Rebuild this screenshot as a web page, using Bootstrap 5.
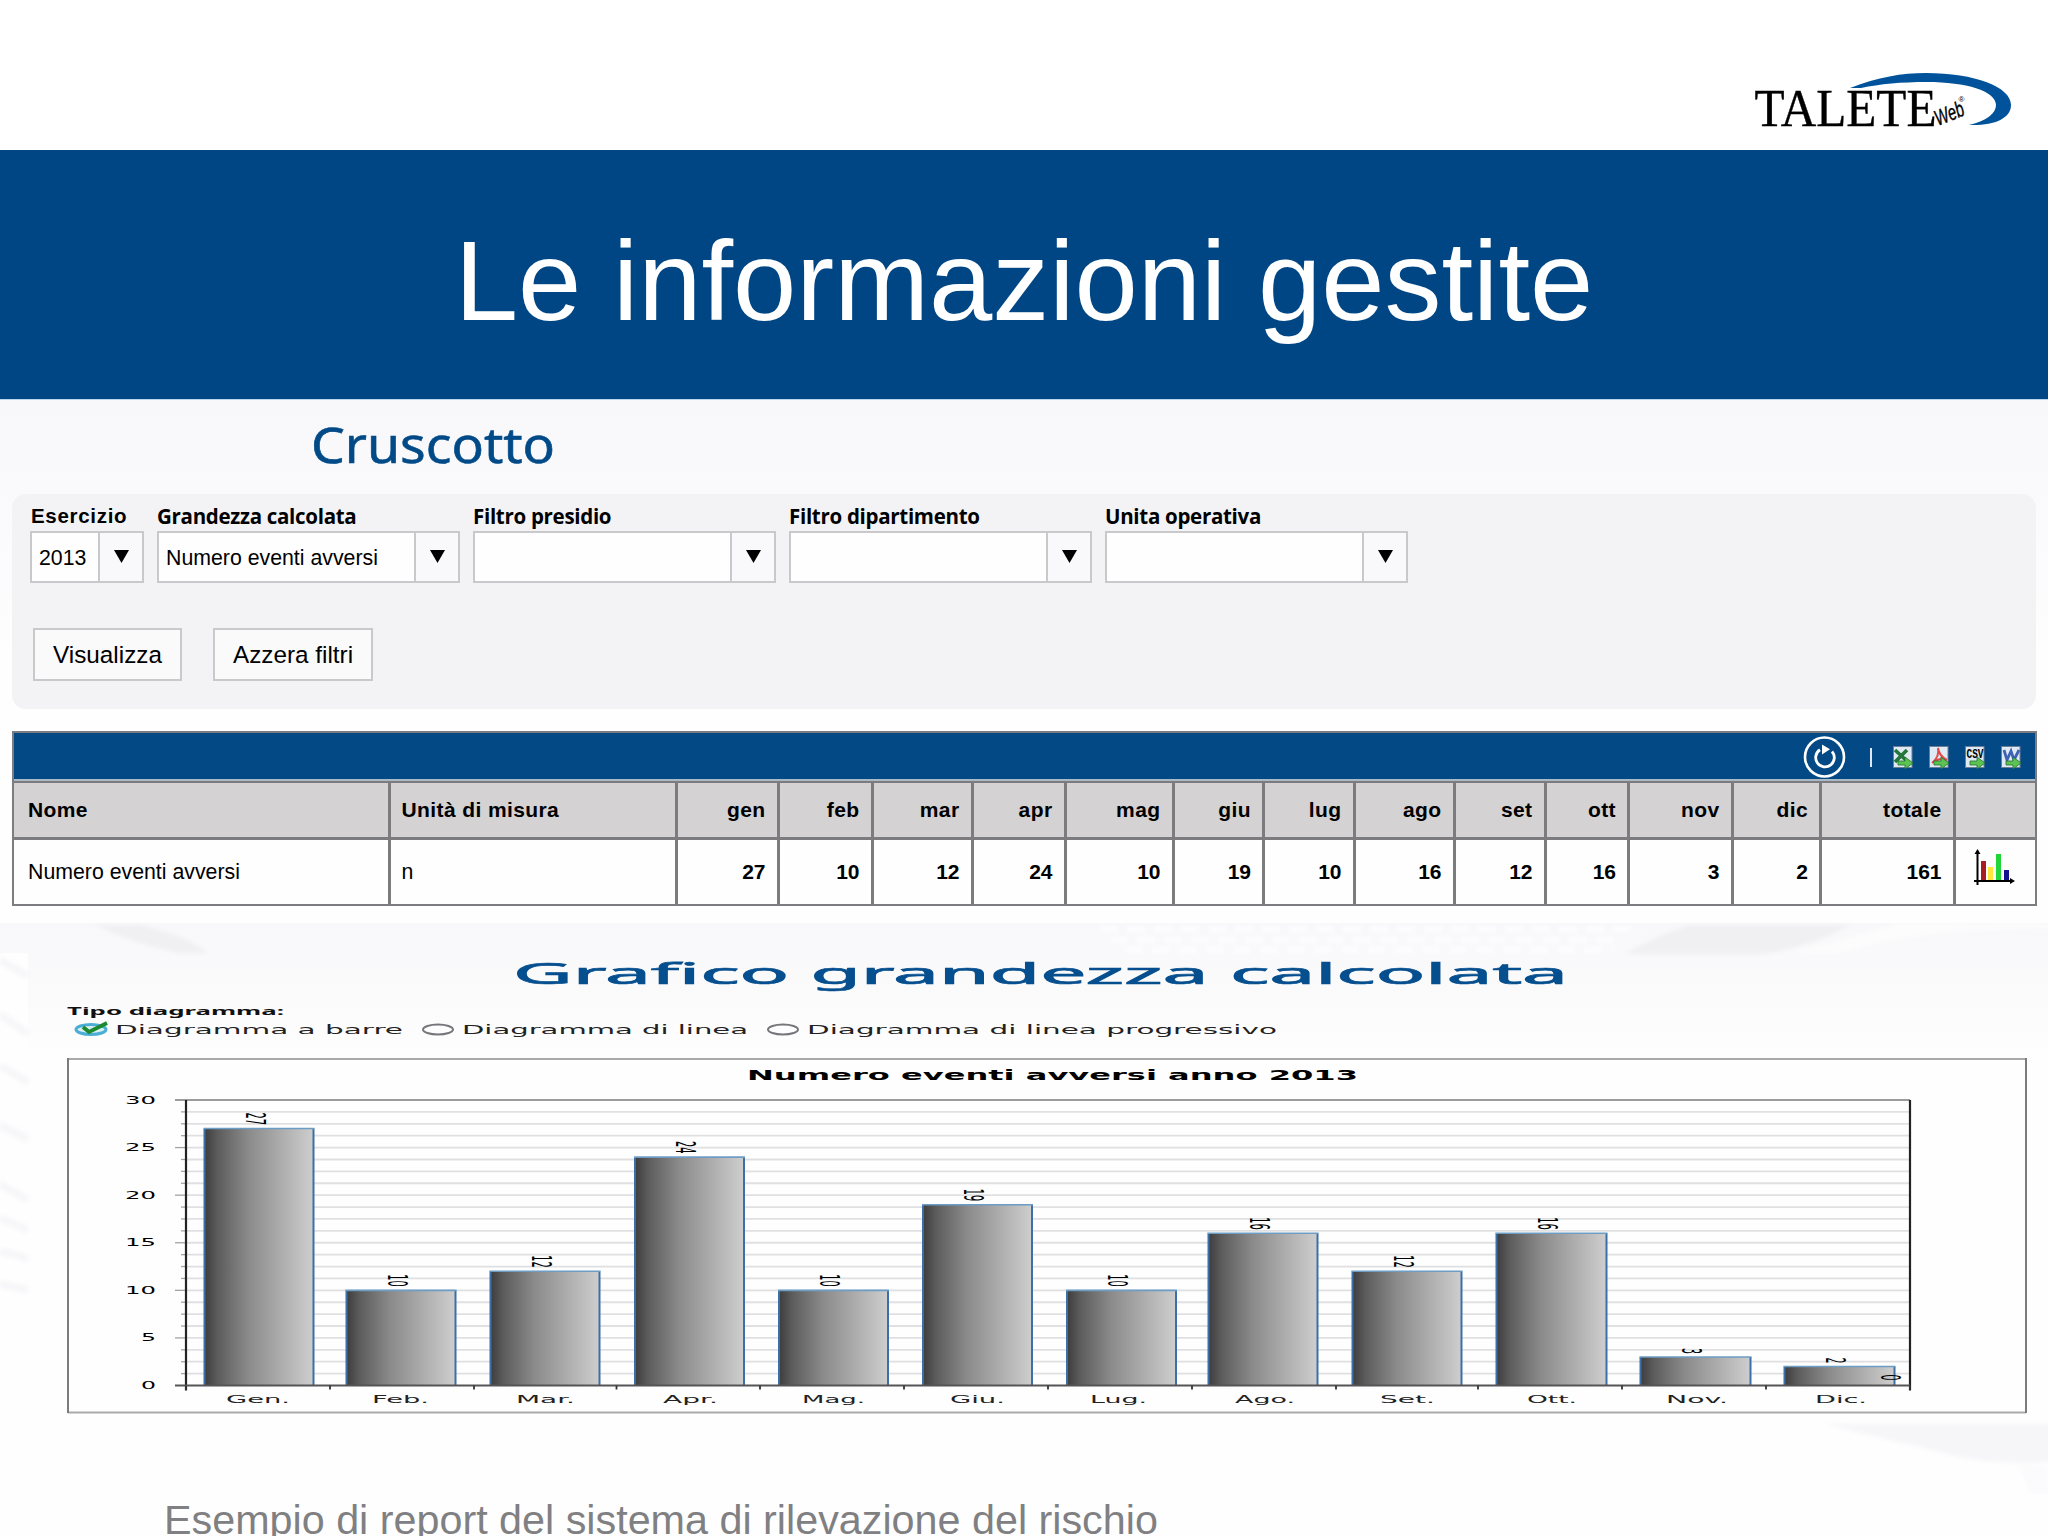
<!DOCTYPE html>
<html lang="it">
<head>
<meta charset="utf-8">
<title>Le informazioni gestite</title>
<link rel="stylesheet" href="https://cdn.jsdelivr.net/npm/bootstrap@5.3.0/dist/css/bootstrap.min.css">
<style>
body{width:2048px;height:1536px;overflow:hidden;background:#fefefe;color:#000;font-family:"Liberation Sans",Arial,sans-serif}
svg{display:block}
.brand-bar{height:150px;padding:60px 0 0 1745px;background:#fff}
.title-band{height:249px;background:#004685;padding-top:12px}
.title-band h1{font-size:113.8px;font-weight:400;line-height:1}
.board{height:523px;background:linear-gradient(#f8f7fa 0,#faf9fc 90px,#fefefe 260px);border-top:1px solid #b9d8ee}
.board-head{height:94px;padding-left:300px}
.filter-panel{margin:0 12px;height:215px;background:#f3f2f5;border-radius:14px;padding:9px 18px 0}
.filters{gap:13px}
.filters label{display:block;height:28px;font:700 20.5px/26px "Open Sans","Noto Sans",sans-serif;letter-spacing:-.3px;white-space:nowrap}
.filters label.plain-label{font-family:"Liberation Sans",sans-serif;font-size:20.5px;letter-spacing:.7px;padding-left:1px}
.combo{width:303px;height:52px;border:2px solid #c9c8cb;background:#fefefe;font-size:21.3px}
.combo-year{width:114px}
.combo-text{padding-left:7px;padding-top:3px;white-space:nowrap}
.combo-arrow{width:44px;background:#f9f8fb;border-left:2px solid #c9c8cb}
.combo-arrow svg{margin-top:-2px}
.btn-line{padding:45px 0 0 3px;gap:31px}
.tool-btn{height:53px;width:149px;border:2px solid #c9c8cb;border-radius:0;background:#fafafb;font-size:24.3px;line-height:49px;padding:0;color:#000}
.tool-btn.btn-wide{width:160px}
.data-box{margin:22px 11px 0 12px;border:2px solid #7b7d80}
.tool-strip{height:48px;background:#024986;border-bottom:2px solid #a9bac6;padding-right:14px}
.data-tbl{table-layout:fixed;width:2021px;border-collapse:collapse;font-size:21px;margin:0}
.data-tbl th,.data-tbl td{border:3px solid #7c7b7d;border-top-width:2px;padding:0 11px 0 11px;vertical-align:middle;line-height:24px;white-space:nowrap}
.data-tbl tr>*:first-child{border-left:0;padding-left:14px}
.data-tbl tr>*:last-child{border-right:0;padding:0}
.data-tbl tbody tr>*{border-bottom:0}
.data-tbl th{height:56px;background:#d4d2d3;letter-spacing:.4px}
.data-tbl td{height:66px;background:#fefefe;font-weight:700}
.data-tbl td.thin{font-weight:400;font-size:21.3px}
.chart-zone{height:572px}
.foot-note{margin-left:164px;padding-top:5px;font-size:41.3px;line-height:42px;height:42px;color:#808083;white-space:nowrap}
</style>
</head>
<body>
<header class="brand-bar">
<svg width="280" height="75" viewBox="1745 60 280 75">
<path d="M1850 88C1878 77 1902 73 1926 73C1975 73 2011 87 2011 105C2011 119 1993 126 1969 125C1987 121 1996 113 1996 105C1996 91 1966 82 1927 82C1901 82 1880 84 1861 88Z" fill="#00539b"/>
<text x="1754.500" y="125.500" font-family="Liberation Serif,serif" font-size="53" textLength="182" lengthAdjust="spacingAndGlyphs" stroke="#000" stroke-width=".4">TALETE</text>
<text transform="translate(1938 126) rotate(-22)" font-family="Liberation Sans,sans-serif" font-style="italic" font-size="22" textLength="30" lengthAdjust="spacingAndGlyphs" stroke="#000" stroke-width=".4">Web</text>
<text x="1958.500" y="101.500" font-family="Liberation Sans,sans-serif" font-size="8">®</text>
</svg>
</header>
<section class="title-band d-flex align-items-center justify-content-center"><h1 class="m-0 text-white">Le informazioni gestite</h1></section>
<section class="board">
<div class="board-head">
<svg width="300" height="94" viewBox="300 400 300 94"><text x="311" y="462.500" fill="#004a87" stroke="#004a87" stroke-width=".6" font-family="Noto Sans,sans-serif" font-size="49" textLength="244" lengthAdjust="spacingAndGlyphs">Cruscotto</text></svg>
</div>
<div class="filter-panel">
<div class="filters d-flex" id="filters"></div>
<div class="btn-line d-flex">
<button class="tool-btn btn">Visualizza</button>
<button class="tool-btn btn btn-wide">Azzera filtri</button>
</div>
</div>
<div class="data-box">
<div class="tool-strip d-flex justify-content-end">
<svg width="230" height="46" viewBox="1791 733 230 46">
<g fill="none" stroke="#fff"><circle cx="1824.500" cy="757" r="19.500" stroke-width="2.600"/><path d="M1820 749.800A9.300 9.300 0 1 0 1832 751.500" stroke-width="2.800"/></g>
<path d="M1822 744.500l8 4.800-8 5.300z" fill="#fff"/>
<path d="M1871 748v19" stroke="#dfe7f0" stroke-width="2"/>
<g id="files"></g>
<g fill="none" stroke-width="2.800">
<path d="M1895 750l13 12M1907 750l-12 12" stroke="#24763a" stroke-width="3.600"/>
<path d="M1932 763c5-4 7-10 6-15c1 7 5 10 9 12c-5-2-10-1-15 3" stroke="#e14b4b" stroke-width="2"/>
<path d="M2004 750l3 10 4-9 3 9 5-10" stroke="#3f62b5"/>
</g>
<text x="1966.500" y="758" font-family="Liberation Mono,monospace" font-weight="700" font-size="12" textLength="17" lengthAdjust="spacingAndGlyphs">CSV</text>
<g id="arrows"></g>
</svg>
</div>
<table class="data-tbl">
<colgroup id="cols"></colgroup>
<thead><tr id="heads"></tr></thead>
<tbody><tr id="vals"></tr></tbody>
</table>
</div>
</section>
<main class="chart-zone">
<svg width="2048" height="572" viewBox="0 922 2048 572" id="chart">
<defs>
<linearGradient id="bar"><stop offset="0" stop-color="#3d3d3d"/><stop offset=".12" stop-color="#5c5c5c"/><stop offset=".4" stop-color="#8b8a8b"/><stop offset=".75" stop-color="#b3b2b2"/><stop offset="1" stop-color="#cfcece"/></linearGradient>
<linearGradient id="fade" x1="0" y1="0" x2="0" y2="1"><stop offset="0" stop-color="#f8f7f9"/><stop offset="1" stop-color="#fefefe"/></linearGradient>
<filter id="soft"><feGaussianBlur stdDeviation="2"/></filter>
</defs>
<path d="M0 923H2048V953H2048V1060H28V953H0Z" fill="url(#fade)"/>
<g filter="url(#soft)">
<g fill="#f0eff2"><path d="M95 925h45q50 12 68 28h-30q-40-8-83-28z"/><path d="M1690 925h160q-40 22-85 29h-140q30-18 65-29z"/></g>
<path d="M1840 953q90-26 208-24v-6h-150q-50 16-110 30z" fill="#fcfcfd"/>
<g fill="none" stroke="#f6f5f8" stroke-width="7"><path d="M0 960l28 16M0 1014l28 20M0 1066l28 16M0 1125l28 14M0 1184l28 16M0 1218l28 12M0 1252q20 2 28 8M0 1284l28 6"/></g>
<g fill="none" stroke="#fdfdfe" stroke-width="6" stroke-dasharray="18 9"><path d="M1100 929h540M1110 940h510M1125 950h490"/></g>
<path d="M1826 1424h226v38q-70 4-120-12q-60-14-106-26z" fill="#f6f5f8"/>
<path d="M2018 1466q18 30 24 70h6v-70z" fill="#fbfafc"/>
</g>
<text x="513" y="984" fill="#064f8f" stroke="#064f8f" stroke-width=".7" font-family="Noto Sans,sans-serif" font-size="28.500" textLength="1055" lengthAdjust="spacingAndGlyphs">Grafico grandezza calcolata</text>
<text x="67" y="1015" font-family="Noto Sans,sans-serif" font-weight="700" font-size="10.500" textLength="217" lengthAdjust="spacingAndGlyphs" fill="#111">Tipo diagramma:</text>
<g font-family="DejaVu Sans,sans-serif" font-size="12" fill="#222">
<text x="115" y="1033.500" textLength="288" lengthAdjust="spacingAndGlyphs">Diagramma a barre</text>
<text x="462" y="1033.500" textLength="286" lengthAdjust="spacingAndGlyphs">Diagramma di linea</text>
<text x="807" y="1033.500" textLength="470" lengthAdjust="spacingAndGlyphs">Diagramma di linea progressivo</text>
</g>
<g fill="#fdfdfd" stroke="#77767a" stroke-width="2"><ellipse cx="91" cy="1029.500" rx="15" ry="5" stroke="#4baed6" stroke-width="3" fill="#d9eef5"/><ellipse cx="438" cy="1029.500" rx="15" ry="5"/><ellipse cx="783" cy="1029.500" rx="15" ry="5"/></g>
<path d="M83 1027l6 5L107 1023" fill="none" stroke="#1e8a30" stroke-width="4"/>
<rect x="68" y="1059" width="1958" height="353.500" fill="#fefefe"/>
<path d="M68 1059H2026M68 1412.500H2026" stroke="#a9a9ab" stroke-width="1.800"/><path d="M68 1058V1413M2026 1058V1413" stroke="#7c7c7e" stroke-width="2"/>
<text x="747" y="1079.500" font-family="DejaVu Sans,sans-serif" font-weight="700" font-size="13.500" textLength="611" lengthAdjust="spacingAndGlyphs">Numero eventi avversi anno 2013</text>
</svg>
</main>
<div class="foot-note">Esempio di report del sistema di rilevazione del rischio</div>
<script src="https://cdn.jsdelivr.net/npm/bootstrap@5.3.0/dist/js/bootstrap.bundle.min.js"></script>
<script>
const $ = id => document.getElementById(id);
const add = (el, s) => el.insertAdjacentHTML('beforeend', s);
[['Esercizio','2013'],['Grandezza calcolata','Numero eventi avversi'],['Filtro presidio',''],['Filtro dipartimento',''],['Unita operativa','']].forEach(([l,v],i)=>
 add($('filters'),`<div><label class="${i?'':'plain-label'}">${l}</label><div class="combo d-flex ${i?'':'combo-year'}"><div class="combo-text flex-grow-1 d-flex align-items-center">${v}</div><div class="combo-arrow d-flex align-items-center justify-content-center"><svg width="15" height="13"><path d="M0 0h15L7.500 13z"/></svg></div></div></div>`));
const edges=[14,389,676,778,872,972,1065,1173,1263.5,1354,1454,1545,1628.5,1732,1820.5,1954,2035];
edges.slice(1).forEach((e,i)=>add($('cols'),`<col style="width:${e-edges[i]}px">`));
const heads=['Nome','Unità di misura','gen','feb','mar','apr','mag','giu','lug','ago','set','ott','nov','dic','totale',''];
heads.forEach((h,i)=>add($('heads'),`<th class="${i>1?'text-end':''}">${h}</th>`));
const icon='<svg class="mx-auto mb-2" width="44" height="40" viewBox="1973 846 44 40"><g><path fill="#a81c22" d="M1981 859h5v20h-5z"/><path fill="#ffe63a" d="M1988 865h5v14h-5z"/><path fill="#1fd537" d="M1996 852h5v27h-5z"/><path fill="#12128e" d="M2004 868h5v11h-5z"/><path d="M1977.500 849v34M1974 879h39" stroke="#000" stroke-width="2"/><path d="M1977.500 847l3 5h-6zM2015 879l-5-3v6z"/></g></svg>';
const data=[27,10,12,24,10,19,10,16,12,16,3,2];
['Numero eventi avversi','n',...data,161,icon].forEach((v,i)=>add($('vals'),`<td class="${i<2?'thin':'text-end'}">${v}</td>`));
[1893,1929,1965,2001].forEach(x=>{
 add($('files'),`<rect x="${x+.5}" y="746.500" width="18.500" height="21" fill="#dfeaf4" stroke="#6d7f96"/>`);
 add($('arrows'),`<path d="M${x+5} 761h7v-4l8 6-8 6v-4h-7z" fill="#5cc352" stroke="#1f6f2a" stroke-width=".8"/>`);
});
// bar chart
const L=186,R=1910,T=1100,B=1385.5,u=(B-T)/30;
const lefts=[204.5,346.5,490.5,635,779,923,1067,1208.5,1352.5,1496.5,1640.5,1784.5];
const ticks=[186,330,474,616.5,760,904,1048,1192,1336,1478,1622,1766,1910];
const names=['Gen.','Feb.','Mar.','Apr.','Mag.','Giu.','Lug.','Ago.','Set.','Ott.','Nov.','Dic.'];
const nx=[[227,288],[373,427],[517,573],[664,716],[803,863],[951,1003],[1091,1145],[1236,1293],[1381,1433],[1528,1575],[1667,1726],[1816,1865]];
let s='';
for(let k=1;k<24;k++){const y=B-k*1.25*u;s+=`<path d="M${L} ${y}H${R}" stroke="#e0dfe2" stroke-width="1.800"/><path d="M${k%4?L-5:L-11} ${y}H${L}" stroke="#a3a3a5" stroke-width="1.300"/>`;}
s+=`<path d="M${L-11} ${T}H${R}" stroke="#9c9c9e" stroke-width="2"/><path d="M${L} ${T}V${B+5}M${R} ${T}V${B+5}" stroke="#222" stroke-width="2.200"/>`;
const vert=(t,x,y,n)=>`<g transform="translate(${x} ${y}) rotate(90)"><text font-family="DejaVu Sans,sans-serif" font-size="27" textLength="${n}" lengthAdjust="spacingAndGlyphs">${t}</text></g>`;
data.forEach((v,i)=>{const x=lefts[i],w=i>8?110:109,y=B-v*u;
 s+=`<rect x="${x}" y="${y}" width="${w}" height="${v*u}" fill="url(#bar)"/><path d="M${x} ${B}V${y}M${x+w} ${y}V${B}" stroke="#3a70a8" stroke-width="2"/><path d="M${x-1} ${y}h${w+2}" stroke="#6d9cc4" stroke-width="1.600"/>`;
 const n=v>9?12.5:6; s+=vert(v,x+41,y-(v>9?16:9),n);
 s+=`<text x="${nx[i][0]-1}" y="1403" fill="#222" font-family="DejaVu Sans,sans-serif" font-size="11" textLength="${nx[i][1]-nx[i][0]+3}" lengthAdjust="spacingAndGlyphs">${names[i]}</text>`;});
s+=vert(0,1880.5,1374.5,6);
s+=`<path d="M${L-11} ${B}H${R}" stroke="#555" stroke-width="2"/>`;
ticks.forEach(t=>s+=`<path d="M${t} ${B}v4" stroke="#333" stroke-width="1.800"/>`);
for(let v=0;v<=30;v+=5){const w=v>9?31:15;s+=`<text x="${156-w}" y="${B-v*u+3.5}" font-family="DejaVu Sans,sans-serif" font-size="10.500" textLength="${w}" lengthAdjust="spacingAndGlyphs">${v}</text>`;}
add($('chart'),s);
</script>
</body>
</html>
